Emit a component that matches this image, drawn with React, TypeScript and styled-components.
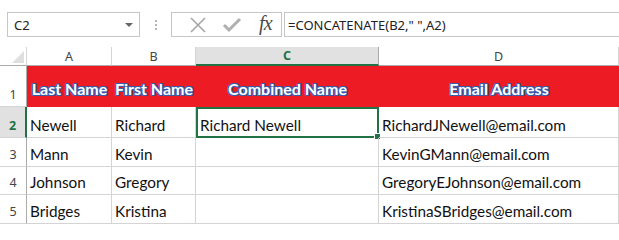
import React from 'react'
import styled, { createGlobalStyle } from 'styled-components'

const GlobalStyle = createGlobalStyle`
  html, body {
    margin: 0;
    padding: 0;
    background: #fff;
  }
`

const Sheet = styled.div`
  width: 619px;
  height: 224px;
  overflow: hidden;
  background: #fff;
  font-family: Lato, 'Liberation Sans', sans-serif;
`

const Toolbar = styled.div`
  display: flex;
  align-items: stretch;
  height: 25px;
  padding: 12px 0 10px 7px;
`

const NameBox = styled.div`
  width: 133px;
  box-sizing: border-box;
  border: 1px solid #c6c6c6;
  display: flex;
  align-items: center;
  justify-content: space-between;
  padding: 0 6px 0 6px;
  font-family: 'Noto Sans', 'Open Sans', sans-serif;
  font-size: 13px;
  color: #222;
`

const Caret = styled.span`
  width: 0;
  height: 0;
  border-left: 4px solid transparent;
  border-right: 4px solid transparent;
  border-top: 4px solid #666;
  margin-top: 1px;
`

const Grip = styled.div`
  width: 31px;
  display: flex;
  flex-direction: column;
  align-items: center;
  justify-content: center;
  gap: 2px;

  span {
    width: 2px;
    height: 2px;
    background: #b5b5b5;
  }
`

const FxButtons = styled.div`
  width: 111px;
  box-sizing: border-box;
  border: 1px solid #c6c6c6;
  display: flex;
  align-items: center;
  padding: 0 0 0 9px;
`

const FxIcon = styled.span<{ $w: number }>`
  width: ${p => p.$w}px;
  display: flex;
  align-items: center;
  justify-content: center;
`

const FxGlyph = styled.span`
  font-family: 'Liberation Serif', serif;
  font-style: italic;
  font-size: 20px;
  color: #4a4a4a;
  letter-spacing: -1px;
  margin-top: -2px;
`

const Formula = styled.div`
  flex: 1;
  margin-left: 2px;
  box-sizing: border-box;
  border: 1px solid #c6c6c6;
  border-right: none;
  display: flex;
  align-items: center;
  padding-left: 3px;
  font-family: 'Noto Sans', 'Open Sans', sans-serif;
  font-size: 13px;
  color: #222;
  white-space: pre;
`

const Grid = styled.div`
  display: grid;
  grid-template-columns: 27px 85px 84px 183px 1fr;
  grid-template-rows: 19px 41px 31px 29px 28px 29px;
`

const Corner = styled.div`
  border-right: 1px solid #d4d4d4;
  border-bottom: 1px solid #ababab;
  display: flex;
  align-items: flex-end;
  justify-content: flex-end;
  padding: 0 2px 2px 0;

  &::after {
    content: '';
    width: 0;
    height: 0;
    border-left: 12px solid transparent;
    border-bottom: 12px solid #dfdfdf;
  }
`

const ColHead = styled.div<{ $active?: boolean }>`
  display: flex;
  align-items: center;
  justify-content: center;
  box-sizing: border-box;
  font-family: 'Noto Sans', 'Open Sans', sans-serif;
  font-size: 12.5px;
  color: ${p => (p.$active ? '#217346' : '#444')};
  font-weight: ${p => (p.$active ? 700 : 400)};
  background: ${p => (p.$active ? '#e1e1e1' : '#fff')};
  border-right: 1px solid ${p => (p.$active ? '#ababab' : '#d4d4d4')};
  border-bottom: ${p => (p.$active ? '2px solid #217346' : '1px solid #ababab')};
`

const RowHead = styled.div<{ $active?: boolean }>`
  display: flex;
  align-items: flex-end;
  justify-content: center;
  box-sizing: border-box;
  padding-bottom: 3px;
  font-family: 'Noto Sans', 'Open Sans', sans-serif;
  font-size: 12.5px;
  color: ${p => (p.$active ? '#217346' : '#444')};
  font-weight: ${p => (p.$active ? 700 : 400)};
  background: ${p => (p.$active ? '#e1e1e1' : '#fff')};
  border-right: ${p => (p.$active ? '2px solid #217346' : '1px solid #ababab')};
  border-bottom: 1px solid #d4d4d4;
`

const HeadCell = styled.div`
  background: #ed1c24;
  display: flex;
  align-items: center;
  justify-content: center;
  padding-top: 3px;
  box-sizing: border-box;
  font-weight: 700;
  font-size: 16px;
  color: #fff;
  white-space: nowrap;
  text-shadow:
    1px 0 0 #3a5ba8,
    -1px 0 0 #3a5ba8,
    0 1px 0 #3a5ba8,
    0 -1px 0 #3a5ba8,
    1px 1px 0 #3a5ba8,
    -1px -1px 0 #3a5ba8,
    1px -1px 0 #3a5ba8,
    -1px 1px 0 #3a5ba8;
`

const Cell = styled.div<{ $selected?: boolean }>`
  position: relative;
  box-sizing: border-box;
  display: flex;
  align-items: flex-end;
  padding: 0 0 3px 3px;
  font-size: 15.3px;
  color: #111;
  white-space: nowrap;
  border-right: 1px solid #d4d4d4;
  border-bottom: 1px solid #d4d4d4;
  ${p =>
    p.$selected &&
    `
    border: 2px solid #217346;
    padding: 0 0 2px 2px;
  `}
`

const FillHandle = styled.span`
  position: absolute;
  right: -4px;
  bottom: -4px;
  width: 5px;
  height: 5px;
  background: #217346;
  border: 1px solid #fff;
`

const rows = [
  ['Newell', 'Richard', 'Richard Newell', 'RichardJNewell@email.com'],
  ['Mann', 'Kevin', '', 'KevinGMann@email.com'],
  ['Johnson', 'Gregory', '', 'GregoryEJohnson@email.com'],
  ['Bridges', 'Kristina', '', 'KristinaSBridges@email.com'],
]

const App = () => {
  return (
    <>
      <GlobalStyle />
      <Sheet>
        <Toolbar>
          <NameBox>
            C2
            <Caret />
          </NameBox>
          <Grip>
            <span />
            <span />
            <span />
          </Grip>
          <FxButtons>
            <FxIcon $w={34}>
              <svg width="18" height="18" viewBox="0 0 18 18">
                <path d="M2 2 L16 16 M16 2 L2 16" stroke="#a6a6a6" strokeWidth="1.6" fill="none" />
              </svg>
            </FxIcon>
            <FxIcon $w={36}>
              <svg width="20" height="16" viewBox="0 0 20 16">
                <path d="M2 8 L7 13 L18 2" stroke="#b0b0b0" strokeWidth="3" fill="none" />
              </svg>
            </FxIcon>
            <FxIcon $w={32}>
              <FxGlyph>fx</FxGlyph>
            </FxIcon>
          </FxButtons>
          <Formula>=CONCATENATE(B2," ",A2)</Formula>
        </Toolbar>
        <Grid>
          <Corner />
          <ColHead>A</ColHead>
          <ColHead>B</ColHead>
          <ColHead $active>C</ColHead>
          <ColHead>D</ColHead>

          <RowHead>1</RowHead>
          <HeadCell>Last Name</HeadCell>
          <HeadCell>First Name</HeadCell>
          <HeadCell>Combined Name</HeadCell>
          <HeadCell>Email Address</HeadCell>

          {rows.map((r, i) => (
            <React.Fragment key={i}>
              <RowHead $active={i === 0}>{i + 2}</RowHead>
              {r.map((v, j) => (
                <Cell key={j} $selected={i === 0 && j === 2}>
                  {v}
                  {i === 0 && j === 2 && <FillHandle />}
                </Cell>
              ))}
            </React.Fragment>
          ))}
        </Grid>
      </Sheet>
    </>
  )
}

export default App
